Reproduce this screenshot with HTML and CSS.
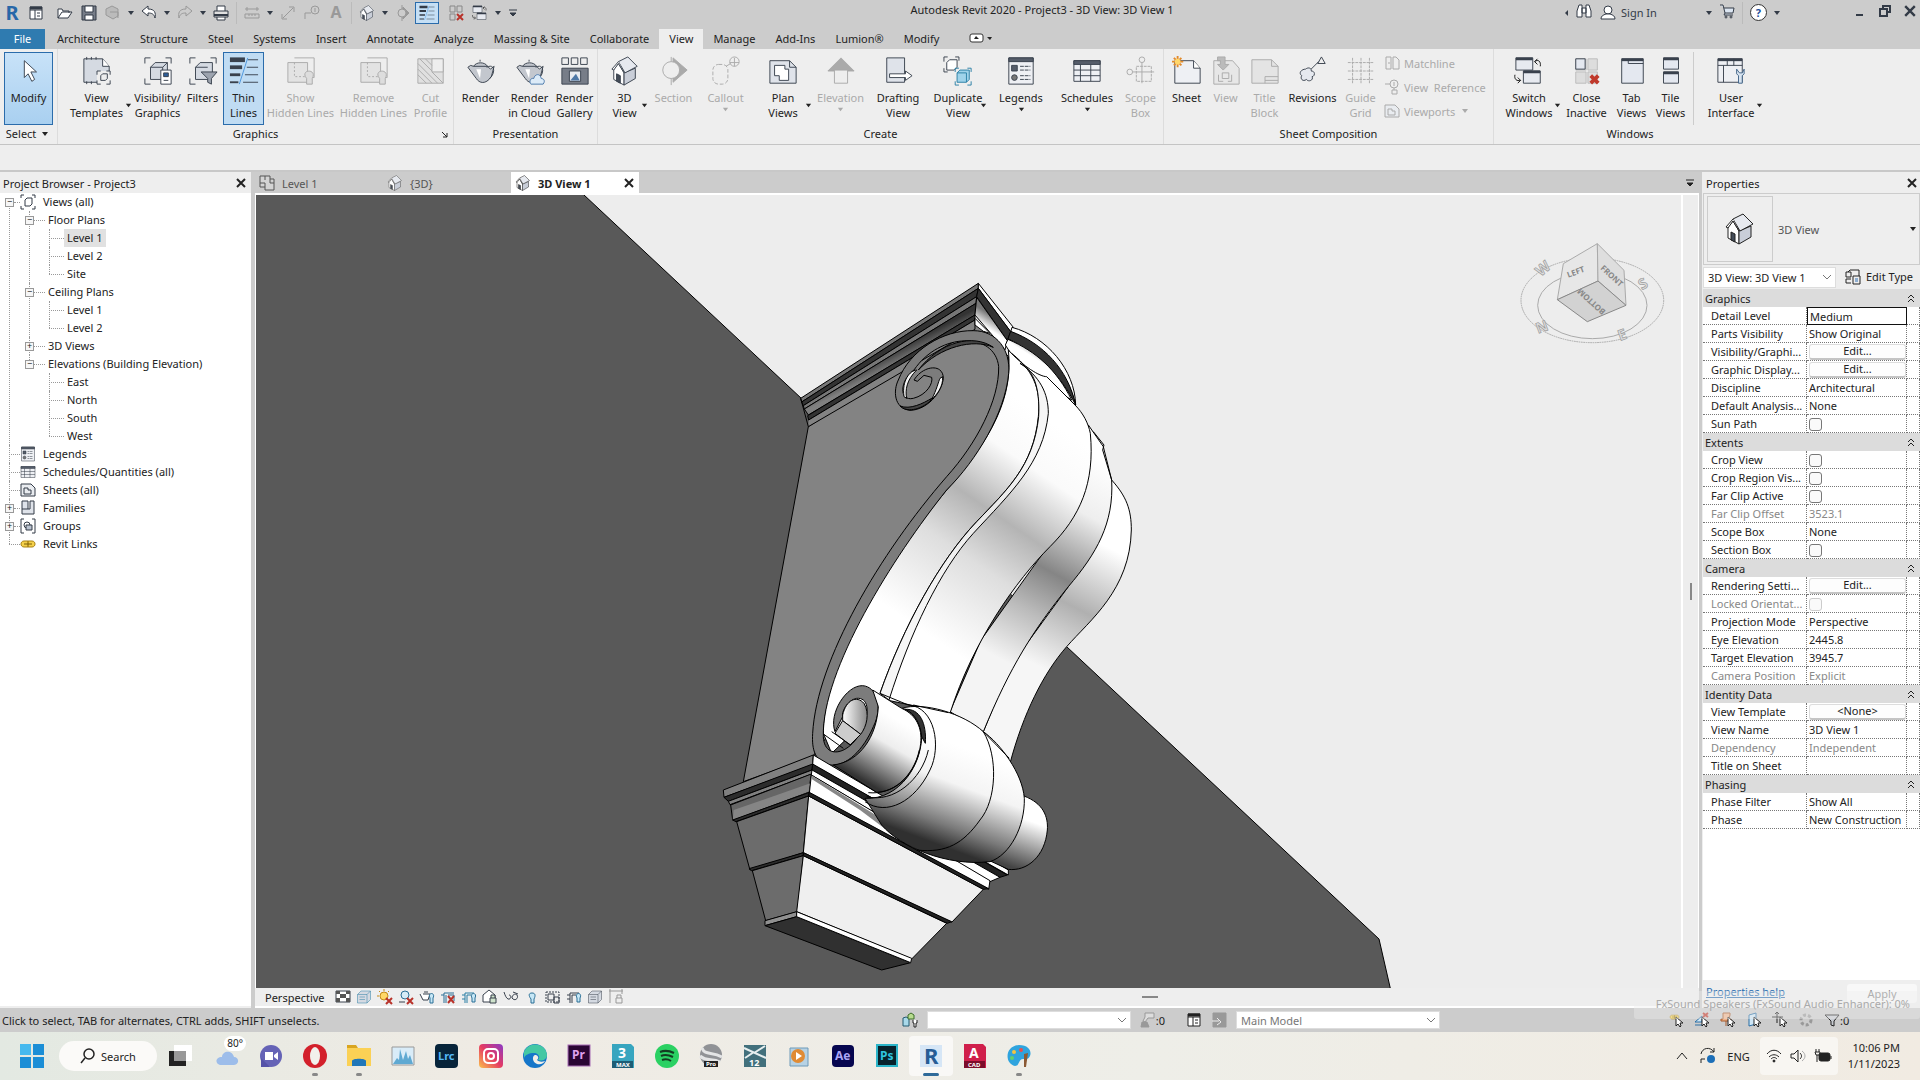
FILE: index.html
```html
<!DOCTYPE html>
<html lang="en">
<head>
  <meta charset="UTF-8">
  <meta name="viewport" content="width=device-width, initial-scale=1.0">
  <title>Autodesk Revit 2020 - Project3 - 3D View: 3D View 1</title>
  <link rel="stylesheet" href="styles.css">
</head>
<body>

  <!-- Icon library -->
  <svg class="defs" width="0" height="0" aria-hidden="true">
    <symbol id="house" viewBox="0 0 32 32"><path fill="#fff" d="M4 14v11l11 6V18L9 8z"/><path fill="#c9ced8" d="M15 18v13l12-7V13z"/><path fill="#e6e9ef" d="M9 6l10-5 10 10-13 7z"/><path fill="#fff" d="M9 6L2 14l2 1 5-7 6 10"/><path fill="#444c58" d="M7 19l4 2v8l-4-2z"/></symbol>
    <symbol id="cube" viewBox="0 0 32 32"><path fill="#d5dae2" d="M3 11l7-7h19v17l-7 7H3zM3 11h19v17M22 11l7-7M7 16h11M7 21h11"/></symbol>
    <symbol id="cursor" viewBox="0 0 32 32"><path fill="#fff" d="M11 5v18l4-4 4 8 3-2-4-8h6z"/></symbol>
    <symbol id="templates" viewBox="0 0 32 32"><path fill="#d5dae2" d="M2 3h20l7 8v17H2z"/><path fill="#fff" d="M22 3v8h7"/><path d="M5 1v3M10 1v3M15 1v3M5 27v3M10 27v3"/><path fill="#eee" d="M16 16h14v14H16z" stroke="none"/><path d="M16 20v-4h4M26 16h4v4M30 26v4h-4M20 30h-4v-4M20 21l2-2h5v5l-2 2h-5z"/></symbol>
    <symbol id="vis" viewBox="0 0 32 32"><path d="M2 8V2h6M24 2h6v6M8 30H2v-6"/><path fill="#d5dae2" d="M8 12l5-5h13v13l-5 5H8zM8 12h13v13M21 12l5-5"/><path fill="#fff" d="M19 15h11v15H19z"/><path fill="#2e5f9a" d="M22 18h5v4h-5zM22 26h5"/></symbol>
    <symbol id="filters" viewBox="0 0 32 32"><path d="M2 8V2h6M24 2h6v6M8 30H2v-6"/><path fill="#d5dae2" d="M8 12l5-5h13v13l-5 5H8zM8 12h13"/><path fill="#9da4af" d="M14 17h17l-6 7v6l-4-2v-4z"/></symbol>
    <symbol id="thin" viewBox="0 0 32 32"><path stroke-width="5" d="M1 4h16"/><path stroke-width="4" d="M1 12h13"/><path stroke-width="3" d="M1 20h11"/><path stroke-width="2" d="M1 28h9"/><path d="M20 4h11M19 12h12M17 20h14M15 28h16"/><path stroke="#4a94dc" d="M20 2l-9 28"/></symbol>
    <symbol id="hidden" viewBox="0 0 32 32"><path d="M9 2h21v21h-8"/><path fill="#e3e3e3" d="M2 7h21v21H2z"/><path stroke-dasharray="2 2" d="M9 7v15h13"/><path fill="#ddd" d="M22 24c-8-10 12-11 6 0v6h-6z"/></symbol>
    <symbol id="profile" viewBox="0 0 32 32"><path fill="#e0e0e0" d="M2 3h27v26H2z"/><path fill="#eee" d="M17 3h12v14H17z"/><path stroke-width="1" d="M2 8l21 21M2 14l15 15M2 20l9 9M4 3l13 13M10 3l7 7M17 17l12 12"/></symbol>
    <symbol id="teapot" viewBox="0 0 32 32"><path fill="#c3c7ce" d="M8 11h15l3 3 4-3-3 11c-6 9-13 7-16 2L2 12l3-2zM8 11c3-5 12-5 15 0M15 6V4"/><path d="M22 12c10-5 9 8 3 12" /><path fill="#fff" stroke="none" d="M11 14h5l-1 10z"/></symbol>
    <symbol id="cloudpot" viewBox="0 0 32 32"><use href="#teapot"/><path fill="#dcebf8" stroke="#4a78aa" d="M17 30h13c3-4 0-6-2-6-1-6-7-5-8 0-4-1-5 4-3 6z"/></symbol>
    <symbol id="gallery" viewBox="0 0 32 32"><path d="M2 2h7v7H2zM12 2h7v7h-7zM22 2h7v7h-7z"/><path fill="#777d88" d="M2 13h28v17H2z"/><path fill="#e7eaf0" d="M10 16h12v11H10z"/><path fill="#4d77a6" stroke="none" d="M11 26l6-7 4 7z"/></symbol>
    <symbol id="section" viewBox="0 0 32 32"><path fill="currentColor" d="M15 2l15 13-15 13z"/><circle cx="13" cy="15" r="9" fill="#eee"/><path d="M13 1v5M13 24v7"/></symbol>
    <symbol id="callout" viewBox="0 0 32 32"><rect x="2" y="9" width="16" height="21" rx="6" stroke-dasharray="4 2"/><circle cx="25" cy="6" r="5"/><path d="M16 11l5-3M20 7h10M25 2v9"/></symbol>
    <symbol id="plan" viewBox="0 0 32 32"><path fill="#dfe3ea" d="M2 5h21l7 7v17H2z"/><path d="M23 5v7h7"/><path fill="#fff" d="M7 10h11v4h4v12H12v-5H7z"/></symbol>
    <symbol id="elevation" viewBox="0 0 32 32"><path fill="currentColor" d="M16 2L2 16h28z"/><path fill="#eee" d="M9 15h14v14H9z"/></symbol>
    <symbol id="drafting" viewBox="0 0 32 32"><path fill="#dfe3ea" d="M4 2h19v26H4z"/><path fill="#fff" d="M7 19h17v-3l7 5-7 5v-3H7z"/></symbol>
    <symbol id="duplicate" viewBox="0 0 32 32"><path d="M1 6V1h4M13 1h4v4M5 17H1v-4"/><path fill="#fff" d="M4 7l3-3h8v8l-3 3H4z"/><path stroke="#2a7fa5" d="M13 17v-4h4M26 13h4v4M30 27v4h-4M17 31h-4v-4"/><path fill="#9fd3ea" stroke="#2a7fa5" d="M15 18l3-3h10v10l-3 3H15zM15 18h10v10"/></symbol>
    <symbol id="legends" viewBox="0 0 32 32"><path fill="#eef0f4" d="M3 2h26v28H3z"/><path fill="#555d6a" d="M3 2h26v4H3zM6 10h6v6H6z"/><circle cx="9" cy="23" r="3" fill="#777"/><path stroke-dasharray="4 1" d="M15 11h11M15 15h11M15 21h11M15 25h11"/></symbol>
    <symbol id="schedule" viewBox="0 0 32 32"><path fill="#eef0f4" d="M2 5h28v22H2z"/><path fill="#555d6a" d="M2 5h28v4H2z"/><path stroke-width="1" d="M2 15h28M2 21h28M9 9v18M20 9v18"/></symbol>
    <symbol id="scope" viewBox="0 0 32 32"><circle cx="17" cy="4" r="3"/><circle cx="4" cy="17" r="3"/><path stroke-dasharray="3 1" d="M11 11h16v16H11z"/><path d="M17 7v22M7 17h23"/></symbol>
    <symbol id="sheet" viewBox="0 0 32 32"><path fill="#eef0f4" d="M3 5h20l7 8v16H3z"/><path fill="#fff" d="M23 5v8h7"/><path stroke="#e28a2b" stroke-width="2" d="M6 0v12M0 6h12M2 2l8 8M10 2l-8 8"/><circle cx="6" cy="6" r="3" fill="#ffd76b" stroke="none"/></symbol>
    <symbol id="sheetview" viewBox="0 0 32 32"><path fill="#e7e7e7" d="M3 5h20l7 8v17H3z"/><path fill="#bbb" d="M7 1h8v8h4l-6 6-6-6h3V5H7z"/><path d="M8 20v7h5M22 20v7h-4M12 18h7v6h-7z"/></symbol>
    <symbol id="titleblock" viewBox="0 0 32 32"><path fill="#e4e4e4" d="M2 4h21l7 7v18H2z"/><path d="M23 4v7h7M16 22h14M16 22v7M16 26h14"/></symbol>
    <symbol id="revisions" viewBox="0 0 32 32"><path fill="#e6e9ef" d="M8 14c4-3 7 0 6 2 5 0 4 6 1 6 2 4-4 6-6 3-4 3-7-1-5-4-4-3 0-7 4-7z"/><path d="M14 14l8-8M21 8l4-7 4 7z"/></symbol>
    <symbol id="grid" viewBox="0 0 32 32"><path stroke-dasharray="3 1" stroke-width="1" d="M7 2v28M16 2v28M25 2v28M2 7h28M2 16h28M2 25h28"/></symbol>
    <symbol id="switch" viewBox="0 0 32 32"><path fill="#e7eaf0" d="M2 2h18v13H2zM10 16h18v13H10z"/><path stroke-width="3" d="M2 3h18M10 17h18"/><path stroke="#111" d="M22 6c4-3 7 0 6 5M25 3l-3 3 3 3M1 20c-1 5 2 7 6 6M4 29l3-3-3-3"/></symbol>
    <symbol id="closewin" viewBox="0 0 32 32"><path fill="#ddd" stroke="#bbb" d="M4 3h11v12H4zM17 3h10v12H17zM4 17h11v12H4zM17 17h10v12H17z"/><path fill="#e4e8f0" d="M4 3h10v11H4z"/><path stroke="#c0392b" stroke-width="4" d="M20 21l8 8M28 21l-8 8"/></symbol>
    <symbol id="tabwin" viewBox="0 0 32 32"><path fill="#e4e8f0" d="M5 3h23v26H5z"/><path stroke-width="3" d="M5 4h23"/><path d="M12 4v4h16"/></symbol>
    <symbol id="tilewin" viewBox="0 0 32 32"><path fill="#e4e8f0" d="M8 2h16v12H8zM8 17h16v12H8z"/><path stroke-width="3" d="M8 3h16M8 18h16"/></symbol>
    <symbol id="ui" viewBox="0 0 32 32"><path fill="#eef0f4" d="M2 3h26v25H2z"/><path stroke-width="3" d="M2 4h26"/><path d="M2 10h26M8 10v18M12 3v7M19 3v7"/><path fill="#d7e3f0" stroke="#3f6286" d="M22 14v5l2 2v8h4v-8l2-2v-5l-2 4h-3z"/></symbol>
    <symbol id="matchline" viewBox="0 0 16 16"><path d="M7 2H2v12h5M9 2h3l3 3v9H9M7 2v12M9 2v12M4 8h2"/></symbol>
    <symbol id="viewref" viewBox="0 0 16 16"><circle cx="10" cy="5" r="4"/><path d="M1 5h5M10 9v2M8 11h5v4H8zM10 3v4"/></symbol>
    <symbol id="planmini" viewBox="0 0 16 16"><path fill="#e9ecf0" d="M1 2h10l4 4v8H1z"/><path d="M4 6h4v2h3v4H4z"/></symbol>
    <symbol id="floor" viewBox="0 0 16 16"><path fill="#d4d4d4" d="M1 1h10v3h4v11H6v-3H1zM6 1v4M1 8h5v4M11 4v4h4"/></symbol>
    <symbol id="panel" viewBox="0 0 16 16"><path fill="#fff" d="M2 2h12v12H2zM2 5h12M7 5v9M9 8h3M9 11h3"/><path stroke-width="3" d="M2 3h12"/></symbol>
    <symbol id="open" viewBox="0 0 16 16"><path fill="#fff" d="M1 13V4h4l1 2h6v2M1 13l4-6h10l-4 6z"/></symbol>
    <symbol id="save" viewBox="0 0 16 16"><path fill="#777d88" d="M1 1h14v14H1z"/><path fill="#fff" d="M4 1h8v6H4zM4 10h8v5H4z"/></symbol>
    <symbol id="sync" viewBox="0 0 16 16"><path fill="#bbb" d="M1 4l6-3 6 3v7l-5 3-7-4zM5 7h8v6"/></symbol>
    <symbol id="undo" viewBox="0 0 16 16"><path fill="#fff" d="M1 6l6-5v3c7 0 8 4 7 9-1-4-3-5-7-5v3z"/></symbol>
    <symbol id="redo" viewBox="0 0 16 16"><path d="M15 6L9 1v3C2 4 1 8 2 13c1-4 3-5 7-5v3z"/></symbol>
    <symbol id="print" viewBox="0 0 16 16"><path fill="#fff" d="M4 6V1h8v5M4 11h8v4H4z"/><path fill="#e0e0e0" d="M1 6h14v6H1z"/><path stroke-width="2" d="M1 10h14"/></symbol>
    <symbol id="measure" viewBox="0 0 16 16"><path d="M1 4h14M3 2v4M13 2v4M1 9h14v4H1zM5 9v2M8 9v2M11 9v2"/></symbol>
    <symbol id="dim" viewBox="0 0 16 16"><path d="M3 13L13 3M9 2h5v5M2 9v5h5"/></symbol>
    <symbol id="tag" viewBox="0 0 16 16"><circle cx="11" cy="5" r="4"/><path d="M1 14V8h6M11 3v4"/></symbol>
    <symbol id="sectionmini" viewBox="0 0 16 16"><path fill="currentColor" d="M8 2l6 6-6 6z"/><circle cx="7" cy="8" r="4" fill="#ccc"/><path d="M7 0v4M7 12v4"/></symbol>
    <symbol id="closemini" viewBox="0 0 16 16"><path d="M2 1h5v6H2zM9 1h5v6H9zM2 9h5v6H2z" stroke="#888"/><path stroke="#b8322a" stroke-width="2" d="M9 9l6 6M15 9l-6 6"/></symbol>
    <symbol id="bino" viewBox="0 0 16 16"><path fill="#fff" d="M3 2h3v12H1V8zM13 2h-3v12h5V8zM6 5h4v5H6z"/></symbol>
    <symbol id="person" viewBox="0 0 16 16"><circle cx="8" cy="5" r="4" fill="#fff"/><path fill="#fff" d="M6 9c-3 1-5 2-5 5h14c0-3-2-4-5-5z"/></symbol>
    <symbol id="cart" viewBox="0 0 16 16"><path fill="#dce6f2" d="M1 2h3l2 8h8l1-5H5M6 10l-1 2h9"/><circle cx="7" cy="14" r="1"/><circle cx="12" cy="14" r="1"/></symbol>
    <symbol id="brackets" viewBox="0 0 16 16"><path d="M4 1H1v3M12 1h3v3M15 12v3h-3M4 15H1v-3M5 6l2-2h5v6l-2 2H5z"/></symbol>
    <symbol id="families" viewBox="0 0 16 16"><path fill="#dfe3ea" d="M2 1h6v8h2V1h4v13H2zM2 9h6"/></symbol>
    <symbol id="groups" viewBox="0 0 16 16"><path d="M4 1H1v14h3M12 1h3v14h-3"/><circle cx="7" cy="7" r="3"/><path fill="#b9c2cf" d="M6 7h6v5H6z"/></symbol>
    <symbol id="link" viewBox="0 0 16 16"><path stroke="#a98213" fill="#f4d04a" d="M4 5h4v6H4c-4 0-4-6 0-6zM8 5h4c4 0 4 6 0 6H8z"/><path stroke="#7b5e08" d="M4 8h8"/></symbol>
    <symbol id="bulb" viewBox="0 0 16 16"><path fill="#c6e7f6" stroke="#2a6f96" d="M7 10C4 6 5 4 8 4s4 2 2 6v4H7z"/></symbol>
    <symbol id="sun" viewBox="0 0 16 16"><circle cx="7" cy="7" r="4" fill="#ffd866" stroke="#c38a19"/><path stroke="#c38a19" d="M7 0v2M0 7h2M2 2l1 1M12 2l-1 1"/><path stroke="#b8322a" stroke-width="2" d="M9 9l6 6M15 9l-6 6"/></symbol>
    <symbol id="shadow" viewBox="0 0 16 16"><circle cx="7" cy="6" r="4" fill="#d6ecf7" stroke="#2a6f96"/><path d="M1 13h6"/><path stroke="#b8322a" stroke-width="2" d="M9 9l6 6M15 9l-6 6"/></symbol>
    <symbol id="crop" viewBox="0 0 16 16"><path stroke="#2a6f96" d="M1 6h3M4 14V4h10M6 14V6M8 6h6v6"/><path stroke="#b8322a" stroke-width="2" d="M8 7l6 7M14 7l-6 7"/></symbol>
    <symbol id="cropview" viewBox="0 0 16 16"><path d="M1 6h3M4 14V4h9M6 14V6h4M1 10h3"/><path fill="#c6e7f6" stroke="#2a6f96" d="M11 9c-3-6 6-6 3 0v4h-3z"/></symbol>
    <symbol id="glasses" viewBox="0 0 16 16"><path d="M1 3c1 3 2 6 4 7 3 1 4-4 1-4M9 9c3 4 7 0 5-3-2-2-5 0-5 3zM10 3l5 2"/></symbol>
    <symbol id="chip" viewBox="0 0 16 16"><path stroke-dasharray="2 1" d="M1 3h13v10H1z"/><path d="M3 5h6v6H3zM9 8h5v6H9z"/></symbol>
    <symbol id="lockhouse" viewBox="0 0 16 16"><path fill="#fff" d="M1 6l6-5 6 5v7H1z"/><path fill="#cfe3cc" d="M8 9h6v5H8zM9 9V6h4v3"/></symbol>
    <symbol id="lockdim" viewBox="0 0 16 16"><path d="M1 2h14M2 0v14M14 0v5M8 9h6v5H8zM9 9V6h4v3"/></symbol>
    <symbol id="pick" viewBox="0 0 16 16"><path fill="#fff" stroke="#222" d="M8 5v9l2-2 2 3 1-1-1-3h3z"/></symbol>
    <symbol id="funnel" viewBox="0 0 16 16"><path fill="#c8ccd2" d="M1 3h14l-5 6v5l-3-1V9z"/></symbol>
    <symbol id="down" viewBox="0 0 8 8"><path fill="currentColor" stroke="none" d="M1 2h6L4 6z"/></symbol>
    <symbol id="up2" viewBox="0 0 8 10"><path d="M1 5l3-3 3 3M1 9l3-3 3 3"/></symbol>
    <symbol id="x" viewBox="0 0 10 10"><path d="M1 1l8 8M9 1L1 9"/></symbol>
  </svg>

  <header class="titlebar">
    <div class="qat">
      <button aria-label="Revit" class="logo-r">R</button>
      <button aria-label="Home"><svg class="icon16"><use href="#panel"/></svg></button>
      <span class="gap"></span>
      <button aria-label="Open"><svg class="icon16"><use href="#open"/></svg></button>
      <button aria-label="Save"><svg class="icon16"><use href="#save"/></svg></button>
      <button class="off" aria-label="Synchronize"><svg class="icon16"><use href="#sync"/></svg></button>
      <svg class="arrow"><use href="#down"/></svg>
      <button aria-label="Undo"><svg class="icon16"><use href="#undo"/></svg></button>
      <svg class="arrow"><use href="#down"/></svg>
      <button class="off" aria-label="Redo"><svg class="icon16"><use href="#redo"/></svg></button>
      <svg class="arrow"><use href="#down"/></svg>
      <button aria-label="Print"><svg class="icon16"><use href="#print"/></svg></button>
      <span class="bar"></span>
      <button class="off" aria-label="Measure"><svg class="icon16"><use href="#measure"/></svg></button>
      <svg class="arrow"><use href="#down"/></svg>
      <button class="off" aria-label="Aligned dimension"><svg class="icon16"><use href="#dim"/></svg></button>
      <button class="off" aria-label="Tag"><svg class="icon16"><use href="#tag"/></svg></button>
      <button class="off letter">A</button>
      <span class="bar"></span>
      <button aria-label="3D view"><svg class="icon16"><use href="#house"/></svg></button>
      <svg class="arrow"><use href="#down"/></svg>
      <button class="off" aria-label="Section"><svg class="icon16"><use href="#sectionmini"/></svg></button>
      <button class="on" aria-label="Thin lines"><svg class="icon16"><use href="#thin"/></svg></button>
      <span class="gap"></span>
      <button aria-label="Close inactive"><svg class="icon16"><use href="#closemini"/></svg></button>
      <button aria-label="Switch windows"><svg class="icon16"><use href="#switch"/></svg></button>
      <svg class="arrow"><use href="#down"/></svg>
      <svg class="arrow customize" viewBox="0 0 10 10"><path d="M1 2h8"/><path fill="currentColor" d="M2 5h6L5 8z"/></svg>
    </div>
    <h1>Autodesk Revit 2020 - Project3 - 3D View: 3D View 1</h1>
    <div class="account">
      <svg class="arrow" viewBox="0 0 8 8"><path fill="currentColor" stroke="none" d="M6 1v6L3 4z"/></svg>
      <button aria-label="Search"><svg class="icon16"><use href="#bino"/></svg></button>
      <button class="signin"><svg class="icon16"><use href="#person"/></svg>Sign In</button>
      <svg class="arrow"><use href="#down"/></svg>
      <button aria-label="Store"><svg class="icon16"><use href="#cart"/></svg></button>
      <span class="bar"></span>
      <button class="help">?</button>
      <svg class="arrow"><use href="#down"/></svg>
      <div class="window-buttons">
        <button aria-label="Minimize"><svg class="icon12" viewBox="0 0 12 12"><path stroke-width="2" d="M2 10h7"/></svg></button>
        <button aria-label="Restore"><svg class="icon12" viewBox="0 0 12 12"><path d="M4 4V1h7v6H8M1 4h7v7H1z"/></svg></button>
        <button aria-label="Close"><svg class="icon12"><use href="#x"/></svg></button>
      </div>
    </div>
  </header>

  <nav class="tabs">
    <button class="file">File</button>
    <button>Architecture</button>
    <button>Structure</button>
    <button>Steel</button>
    <button>Systems</button>
    <button>Insert</button>
    <button>Annotate</button>
    <button>Analyze</button>
    <button>Massing &amp; Site</button>
    <button>Collaborate</button>
    <button class="active">View</button>
    <button>Manage</button>
    <button>Add-Ins</button>
    <button>Lumion®</button>
    <button>Modify</button>
    <button class="minimize" aria-label="Minimize ribbon"><svg width="24" height="10" viewBox="0 0 24 10"><rect x="1" y="1" width="13" height="8" rx="2" fill="#fff" stroke="#333"/><path d="M5 6l2-3 3 3zM18 4h5l-2 3z" fill="#222"/></svg></button>
  </nav>

  <section class="ribbon">
    <div class="group select">
      <div class="tools"><button class="tool w48 modify"><svg><use href="#cursor"/></svg>Modify</button></div>
      <div class="group-name">Select <svg class="arrow"><use href="#down"/></svg></div>
    </div>
    <div class="group">
      <div class="tools">
        <button class="tool w74"><svg><use href="#templates"/></svg>View<br>Templates<svg class="drop"><use href="#down"/></svg></button>
        <button class="tool w48"><svg><use href="#vis"/></svg>Visibility/<br>Graphics</button>
        <button class="tool w40"><svg><use href="#filters"/></svg>Filters</button>
        <button class="tool w40 on"><svg><use href="#thin"/></svg>Thin<br>Lines</button>
        <button class="tool w74" disabled><svg><use href="#hidden"/></svg>Show<br>Hidden Lines</button>
        <button class="tool w74" disabled><svg><use href="#hidden"/></svg>Remove<br>Hidden Lines</button>
        <button class="tool w40" disabled><svg><use href="#profile"/></svg>Cut<br>Profile</button>
      </div>
      <div class="group-name">Graphics<svg class="launch" viewBox="0 0 8 8"><path d="M1 1l5 5M6 2v4H2"/></svg></div>
    </div>
    <div class="group">
      <div class="tools">
        <button class="tool w48"><svg><use href="#teapot"/></svg>Render</button>
        <button class="tool w48"><svg><use href="#cloudpot"/></svg>Render<br>in Cloud</button>
        <button class="tool w40"><svg><use href="#gallery"/></svg>Render<br>Gallery</button>
      </div>
      <div class="group-name">Presentation</div>
    </div>
    <div class="group">
      <div class="tools">
        <button class="tool w48"><svg><use href="#house"/></svg>3D<br>View<svg class="drop"><use href="#down"/></svg></button>
        <button class="tool w48" disabled><svg><use href="#section"/></svg>Section</button>
        <button class="tool w54" disabled><svg><use href="#callout"/></svg>Callout<svg class="drop under"><use href="#down"/></svg></button>
        <button class="tool w60"><svg><use href="#plan"/></svg>Plan<br>Views<svg class="drop"><use href="#down"/></svg></button>
        <button class="tool w54" disabled><svg><use href="#elevation"/></svg>Elevation<svg class="drop under"><use href="#down"/></svg></button>
        <button class="tool w60"><svg><use href="#drafting"/></svg>Drafting<br>View</button>
        <button class="tool w60"><svg><use href="#duplicate"/></svg>Duplicate<br>View<svg class="drop"><use href="#down"/></svg></button>
        <button class="tool w68"><svg><use href="#legends"/></svg>Legends<svg class="drop under"><use href="#down"/></svg></button>
        <button class="tool w68"><svg><use href="#schedule"/></svg>Schedules<svg class="drop under"><use href="#down"/></svg></button>
        <button class="tool w40" disabled><svg><use href="#scope"/></svg>Scope<br>Box</button>
      </div>
      <div class="group-name">Create</div>
    </div>
    <div class="group">
      <div class="tools">
        <button class="tool w40"><svg><use href="#sheet"/></svg>Sheet</button>
        <button class="tool w36" disabled><svg><use href="#sheetview"/></svg>View</button>
        <button class="tool w40" disabled><svg><use href="#titleblock"/></svg>Title<br>Block</button>
        <button class="tool w54"><svg><use href="#revisions"/></svg>Revisions</button>
        <button class="tool w40" disabled><svg><use href="#grid"/></svg>Guide<br>Grid</button>
        <div class="small-tools">
          <button disabled><svg class="icon16"><use href="#matchline"/></svg>Matchline</button>
          <button disabled><svg class="icon16"><use href="#viewref"/></svg>View&nbsp; Reference</button>
          <button disabled><svg class="icon16"><use href="#planmini"/></svg>Viewports <svg class="arrow"><use href="#down"/></svg></button>
        </div>
      </div>
      <div class="group-name">Sheet Composition</div>
    </div>
    <div class="group last">
      <div class="tools">
        <button class="tool w68"><svg><use href="#switch"/></svg>Switch<br>Windows<svg class="drop"><use href="#down"/></svg></button>
        <button class="tool w48"><svg><use href="#closewin"/></svg>Close<br>Inactive</button>
        <button class="tool w40"><svg><use href="#tabwin"/></svg>Tab<br>Views</button>
        <button class="tool w36"><svg><use href="#tilewin"/></svg>Tile<br>Views</button>
        <span class="rule"></span>
        <button class="tool w68"><svg><use href="#ui"/></svg>User<br>Interface<svg class="drop"><use href="#down"/></svg></button>
      </div>
      <div class="group-name">Windows</div>
    </div>
  </section>
  <div class="options-bar"></div>

  <main class="workspace">
    <aside class="browser">
      <div class="panel-title">Project Browser - Project3<button aria-label="Close project browser"><svg class="icon10"><use href="#x"/></svg></button></div>
      <ul class="tree">
        <li><div class="row"><button class="exp">−</button><i class="d6"></i><svg class="icon16"><use href="#brackets"/></svg><span>Views (all)</span></div>
          <ul>
            <li><div class="row"><button class="exp">−</button><i class="d10"></i><span>Floor Plans</span></div>
              <ul>
                <li><div class="row"><i class="d15"></i><span class="selected">Level 1</span></div></li>
                <li><div class="row"><i class="d15"></i><span>Level 2</span></div></li>
                <li><div class="row"><i class="d15"></i><span>Site</span></div></li>
              </ul>
            </li>
            <li><div class="row"><button class="exp">−</button><i class="d10"></i><span>Ceiling Plans</span></div>
              <ul>
                <li><div class="row"><i class="d15"></i><span>Level 1</span></div></li>
                <li><div class="row"><i class="d15"></i><span>Level 2</span></div></li>
              </ul>
            </li>
            <li><div class="row"><button class="exp">+</button><i class="d10"></i><span>3D Views</span></div></li>
            <li><div class="row"><button class="exp">−</button><i class="d10"></i><span>Elevations (Building Elevation)</span></div>
              <ul>
                <li><div class="row"><i class="d15"></i><span>East</span></div></li>
                <li><div class="row"><i class="d15"></i><span>North</span></div></li>
                <li><div class="row"><i class="d15"></i><span>South</span></div></li>
                <li><div class="row"><i class="d15"></i><span>West</span></div></li>
              </ul>
            </li>
          </ul>
        </li>
        <li><div class="row"><i class="d10"></i><svg class="icon16"><use href="#legends"/></svg><span>Legends</span></div></li>
        <li><div class="row"><i class="d10"></i><svg class="icon16"><use href="#schedule"/></svg><span>Schedules/Quantities (all)</span></div></li>
        <li><div class="row"><i class="d10"></i><svg class="icon16"><use href="#planmini"/></svg><span>Sheets (all)</span></div></li>
        <li><div class="row"><button class="exp">+</button><i class="d6"></i><svg class="icon16"><use href="#families"/></svg><span>Families</span></div></li>
        <li><div class="row"><button class="exp">+</button><i class="d6"></i><svg class="icon16"><use href="#groups"/></svg><span>Groups</span></div></li>
        <li><div class="row"><i class="d10"></i><svg class="icon16"><use href="#link"/></svg><span>Revit Links</span></div></li>
      </ul>
    </aside>

    <section class="view">
      <div class="view-tabs">
        <button><svg class="icon16"><use href="#floor"/></svg>Level 1</button>
        <button><svg class="icon16"><use href="#house"/></svg>{3D}</button>
        <button class="active"><svg class="icon16"><use href="#house"/></svg>3D View 1<svg class="icon10 close"><use href="#x"/></svg></button>
        <svg class="tab-menu" viewBox="0 0 10 10"><path d="M1 2h8"/><path fill="currentColor" d="M2 5h6L5 8z"/></svg>
      </div>

      <div class="canvas">
        <svg class="scene" viewBox="256 195 1425 793" preserveAspectRatio="xMinYMin slice">
          <defs>
            <linearGradient id="band" gradientUnits="userSpaceOnUse" x1="966" y1="518" x2="550" y2="1125"><stop offset="0" stop-color="#fff"/><stop offset=".2" stop-color="#fafafa"/><stop offset=".44" stop-color="#b4b4b4"/><stop offset=".65" stop-color="#dedede"/><stop offset="1" stop-color="#fff"/></linearGradient>
            <linearGradient id="bandDark" gradientUnits="userSpaceOnUse" x1="1010" y1="560" x2="690" y2="1150"><stop offset="0" stop-color="#fff"/><stop offset=".25" stop-color="#eee"/><stop offset=".55" stop-color="#858585"/><stop offset=".75" stop-color="#bbb"/><stop offset="1" stop-color="#f4f4f4"/></linearGradient>
            <linearGradient id="bandLast" gradientUnits="userSpaceOnUse" x1="1090" y1="740" x2="860" y2="1200"><stop offset="0" stop-color="#fff"/><stop offset=".2" stop-color="#fff"/><stop offset=".6" stop-color="#b0b0b0"/><stop offset="1" stop-color="#f6f6f6"/></linearGradient>
            <linearGradient id="cove" gradientUnits="userSpaceOnUse" x1="380" y1="250" x2="400" y2="290"><stop offset="0" stop-color="#333"/><stop offset="1" stop-color="#808080"/></linearGradient>
            <linearGradient id="coveLight" gradientUnits="userSpaceOnUse" x1="850" y1="235" x2="815" y2="290"><stop offset="0" stop-color="#777"/><stop offset=".6" stop-color="#fff"/></linearGradient>
            <linearGradient id="barrel" gradientUnits="userSpaceOnUse" x1="810" y1="330" x2="700" y2="625"><stop offset="0" stop-color="#fff"/><stop offset=".35" stop-color="#f4f4f4"/><stop offset=".75" stop-color="#7a7a7a"/><stop offset=".95" stop-color="#303030"/></linearGradient>
            <linearGradient id="roll" gradientUnits="userSpaceOnUse" x1="610" y1="250" x2="500" y2="440"><stop offset="0" stop-color="#fff"/><stop offset=".35" stop-color="#eee"/><stop offset=".95" stop-color="#333"/></linearGradient>
            <linearGradient id="roll2" gradientUnits="userSpaceOnUse" x1="1010" y1="550" x2="960" y2="690"><stop offset="0" stop-color="#fff"/><stop offset="1" stop-color="#444"/></linearGradient>
            <linearGradient id="hole" x1="0" y1="0" x2="1" y2="0"><stop offset="0" stop-color="#fff"/><stop offset="1" stop-color="#888"/></linearGradient>
          </defs>
          <path class="wall" d="M240 180H568L1379 939L1393 1000H240z"/>

          <!-- upper half: side panel, cornice, scroll -->
          <g transform="translate(760 270) scale(.33333)">
            <path fill="#838383" d="M145 470L640 150L746 260L700 700L158 1460L-50 1535z"/>
            <path fill="#777" d="M122 385L655 40V55L125 396z"/>
            <path fill="#333" d="M125 396L655 55L650 80L130 407z"/>
            <path fill="#777" d="M130 407L650 80L648 100L133 417z"/>
            <path fill="url(#cove)" d="M133 417L648 100L645 135L145 435z"/>
            <path fill="#333" d="M143 437L645 135V150L146 450z"/>
            <path fill="#838383" d="M146 450L645 150V178L145 470"/>
            <path fill="#fff" d="M655 40L760 172L752 185L655 55z"/>
            <path fill="#333" d="M655 55L752 185L742 212L650 80z"/>
            <path fill="url(#coveLight)" d="M650 82L742 212L735 240L645 135z"/>
            <path fill="#fff" d="M645 145L690 190L670 184L645 165z"/>
            <path fill="#fff" d="M756 172C860 200 945 300 947 405C925 310 850 225 752 186z"/>
            <path fill="#333" d="M752 184C850 220 925 300 947 405C900 310 830 250 744 206z"/>
            <path fill="url(#coveLight)" d="M744 208C830 245 890 300 935 390L840 330L760 262L736 225z"/>
            <path fill="url(#bandLast)" d="M1055 630C1100 680 1114 720 1114 780C1110 960 990 1050 920 1130C850 1210 790 1330 750 1480L670 1385L750 1190L925 950z"/>
            <path fill="url(#bandDark)" d="M985 465L1030 530L1055 630C1062 760 1010 850 925 950C820 1080 750 1190 670 1385L570 1325L663 1110L870 820z"/>
            <path fill="url(#band)" d="M745 240C790 290 840 320 860 320L945 405C970 430 985 460 991 490C1005 640 960 740 870 830C770 930 640 1110 570 1330L380 1290L215 1450L190 1390C185 1190 400 850 560 660C700 500 760 380 745 240z"/>
            <path fill="none" d="M755 250C830 310 842 370 835 440C820 590 740 660 650 755C540 870 430 1070 360 1270"/>
            <path fill="#f4f4f4" fill-opacity=".8" d="M780 280C820 300 840 350 836 440C820 590 740 660 650 755C540 870 430 1070 360 1270L387 1290C450 1090 540 900 640 790C750 670 850 580 865 430C865 370 840 320 780 280z"/>
            <path class="rim" d="M640 182C710 182 752 240 746 310C735 430 650 570 560 660C400 860 185 1200 190 1400C192 1465 260 1460 300 1390C336 1320 322 1282 290 1285C260 1290 243 1330 248 1340L225 1385C205 1330 260 1245 308 1247C350 1250 370 1310 340 1370C310 1440 260 1490 210 1485C165 1475 155 1440 158 1390C170 1170 360 850 560 620C650 520 718 390 716 290C705 185 540 185 462 300C420 330 415 395 460 385C500 375 520 340 515 322L492 316L472 334L462 330C490 285 550 280 550 325C545 370 500 420 450 421C400 415 400 360 415 330C450 240 550 180 640 182z"/>
            <path fill="#444" d="M475 300C540 215 640 190 700 232C640 205 540 230 475 300z"/>
            <path fill="#f5f5f5" d="M432 380C425 330 450 302 470 300C440 330 435 360 440 385zM548 320C550 350 530 375 515 388C530 360 535 335 540 325z"/>
            <path fill="#444" d="M420 408C450 420 490 400 515 385L510 394C480 420 440 428 420 408z"/>
            <path fill="url(#hole)" d="M248 1335C258 1290 290 1275 312 1300C330 1330 320 1370 302 1393L248 1352z"/>
            <path fill="#ccc" d="M248 1352L302 1393L270 1425L225 1390z"/>
            <path fill="none" d="M190 1392L250 1435M215 1385L272 1425M1000 485L1032 525L1028 540L1055 630M145 470L122 385"/>
          </g>

          <!-- lower half: pedestal and barrel -->
          <g transform="translate(700 640) scale(.33333)">
            <path fill="#808080" d="M70 450L340 345L338 375L72 472z"/>
            <path fill="#2c2c2c" d="M72 472L338 372L336 390L85 484z"/>
            <path fill="#808080" d="M85 484L336 390V402L90 494z"/>
            <path fill="#666" d="M92 495L334 402L326 455L98 540z"/>
            <path fill="#858585" d="M101 510L331 430L326 455L98 540z" stroke="none"/>
            <path fill="#2c2c2c" d="M98 540L328 457L326 468L108 545z"/>
            <path fill="#6c6c6c" d="M110 545L326 468L310 638L150 690z"/>
            <path fill="#2c2c2c" d="M147 686L310 638L310 647L155 692z"/>
            <path fill="#6c6c6c" d="M157 692L310 647L292 815L197 842z"/>
            <path fill="#909090" d="M195 842L290 815V830L195 857z"/>
            <path fill="#303030" d="M195 857L290 830L632 968L545 990z"/>
            <path fill="#fff" d="M340 345L925 690V705L338 374z"/>
            <path fill="#222" d="M338 372L922 705L900 712L336 390z"/>
            <path fill="#fff" d="M336 390L900 712L870 725L334 405z"/>
            <path fill="#fff" d="M334 405L870 722L866 748L328 460z"/>
            <path fill="#888" stroke="none" d="M336 407L560 545L600 600L480 510L336 418z"/>
            <path fill="#efefef" d="M326 468L850 748L755 847L310 638z"/>
            <path fill="#efefef" d="M310 647L740 850L635 957L290 815z"/>
            <path fill="#222" d="M328 457L866 746L850 748L326 468zM310 638L755 845L742 850L310 647z"/>
            <path fill="#fff" d="M290 815L635 955L632 968L290 830z"/>
            <path fill="url(#roll2)" d="M972 468C1030 490 1045 530 1042 570C1035 650 980 695 925 688L860 658z"/>
            <path fill="url(#barrel)" d="M605 205C670 185 790 220 850 275C900 310 968 400 973 475C975 560 930 645 870 665C740 680 600 620 545 555L495 475C600 480 670 370 665 275C655 230 640 212 605 205z"/>
            <path fill="#333" d="M615 208C660 205 680 250 676 310L665 290C660 250 645 220 615 208z"/>
            <path fill="url(#roll)" d="M518 150L605 205C650 225 667 265 662 310C655 385 600 455 530 457L400 375C480 365 530 290 535 200z"/>
            <path fill="none" d="M625 195C705 200 725 320 690 390C645 485 560 530 495 485M850 275C895 350 890 480 840 540C790 610 740 640 650 630M658 330C640 410 580 465 505 458M685 330C665 420 580 490 500 470M928 355L850 275M745 218L640 195M540 160L625 195"/>
          </g>
        </svg>
        <svg class="viewcube" viewBox="0 0 450 330">
          <g fill="none" stroke="#aaa" stroke-width="3">
            <ellipse cx="217" cy="190" rx="214" ry="127" stroke-dasharray="5 2"/><ellipse cx="217" cy="205" rx="164" ry="100"/>
            <path fill="#e7e7e7" d="M130 80L232 20L234 132L112 188z"/><path fill="#dedede" d="M232 20L312 100L318 205L234 132z"/><path fill="#d2d2d2" stroke="#888" d="M234 132L318 205L202 254L112 188z"/>
          </g>
          <text x="145" y="122" transform="rotate(-20 145 122)">LEFT</text>
          <text x="240" y="95" transform="rotate(43 240 95)">FRONT</text>
          <text x="258" y="222" transform="rotate(222 258 222)">BOTTOM</text>
          <text class="compass" x="62" y="120" transform="rotate(-40 62 120)">W</text>
          <text class="compass" x="366" y="160" transform="rotate(-30 366 160)">S</text>
          <text class="compass" x="54" y="290" transform="rotate(-20 54 290)">N</text>
          <text class="compass" x="300" y="312" transform="rotate(-20 300 312)">E</text>
        </svg>
        <div class="vscroll"><span></span></div>
      </div>

      <div class="view-controls">
        <span class="scale">Perspective</span>
        <button aria-label="Detail level"><svg class="icon16" viewBox="0 0 16 16"><path fill="#fff" d="M1 2h14v11H1z"/><path fill="#555" stroke="none" d="M1 2h4v3H1zM11 2h4v3h-4zM5 5h6v4H5zM1 9h4v4H1zM11 9h4v4h-4z"/></svg></button>
        <button aria-label="Visual style"><svg class="icon16 blue"><use href="#cube"/></svg></button>
        <button aria-label="Sun path"><svg class="icon16"><use href="#sun"/></svg></button>
        <button aria-label="Shadows"><svg class="icon16"><use href="#shadow"/></svg></button>
        <button aria-label="Rendering"><svg class="icon16" viewBox="0 0 16 16"><path fill="#fff" d="M1 5l3 6h5l2-6H4M5 3h4"/><path fill="#c6e7f6" stroke="#2a6f96" d="M11 9c-3-6 6-6 3 0v5h-3z"/></svg></button>
        <button aria-label="Crop view"><svg class="icon16"><use href="#crop"/></svg></button>
        <button aria-label="Crop region"><svg class="icon16 blue"><use href="#cropview"/></svg></button>
        <button aria-label="Lock view"><svg class="icon16"><use href="#lockhouse"/></svg></button>
        <button aria-label="Temporary hide"><svg class="icon16"><use href="#glasses"/></svg></button>
        <button aria-label="Reveal hidden"><svg class="icon16"><use href="#bulb"/></svg></button>
        <button aria-label="View properties"><svg class="icon16"><use href="#chip"/></svg></button>
        <button aria-label="Analytical model"><svg class="icon16"><use href="#cropview"/></svg></button>
        <button aria-label="Displacement"><svg class="icon16"><use href="#cube"/></svg></button>
        <button class="off" aria-label="Constraints"><svg class="icon16"><use href="#lockdim"/></svg></button>
        <span class="hscroll"></span>
      </div>
    </section>

    <aside class="properties">
      <div class="panel-title">Properties<button aria-label="Close properties"><svg class="icon10"><use href="#x"/></svg></button></div>
      <div class="type">
        <div class="thumb"><svg class="icon32"><use href="#house"/></svg></div>
        <span>3D View</span>
        <svg class="arrow"><use href="#down"/></svg>
      </div>
      <div class="instance">
        <select aria-label="View"><option>3D View: 3D View 1</option></select>
        <button><svg class="icon16" viewBox="0 0 16 16"><path d="M1 3h5v5H1zM3 3l2-2h9v6M6 10H1v4h5M8 7h7v8H8z"/><path stroke="#2e6fb5" d="M10 10h3M10 12h3"/></svg>Edit Type</button>
      </div>
      <table>
        <colgroup><col class="name"><col><col class="link"></colgroup>
        <tbody>
          <tr class="cat"><th colspan="3">Graphics<svg class="arrow"><use href="#up2"/></svg></th></tr>
          <tr><th>Detail Level</th><td class="focused">Medium</td><td></td></tr>
          <tr><th>Parts Visibility</th><td>Show Original</td><td></td></tr>
          <tr><th>Visibility/Graphi...</th><td><button>Edit...</button></td><td></td></tr>
          <tr><th>Graphic Display...</th><td><button>Edit...</button></td><td></td></tr>
          <tr><th>Discipline</th><td>Architectural</td><td></td></tr>
          <tr><th>Default Analysis...</th><td>None</td><td></td></tr>
          <tr><th><label for="sun-path">Sun Path</label></th><td><input type="checkbox" id="sun-path"></td><td></td></tr>
        </tbody>
        <tbody>
          <tr class="cat"><th colspan="3">Extents<svg class="arrow"><use href="#up2"/></svg></th></tr>
          <tr><th><label for="crop-view">Crop View</label></th><td><input type="checkbox" id="crop-view"></td><td></td></tr>
          <tr><th><label for="crop-region">Crop Region Vis...</label></th><td><input type="checkbox" id="crop-region"></td><td></td></tr>
          <tr><th><label for="far-clip">Far Clip Active</label></th><td><input type="checkbox" id="far-clip"></td><td></td></tr>
          <tr class="readonly"><th>Far Clip Offset</th><td>3523.1</td><td></td></tr>
          <tr><th>Scope Box</th><td>None</td><td></td></tr>
          <tr><th><label for="section-box">Section Box</label></th><td><input type="checkbox" id="section-box"></td><td></td></tr>
        </tbody>
        <tbody>
          <tr class="cat"><th colspan="3">Camera<svg class="arrow"><use href="#up2"/></svg></th></tr>
          <tr><th>Rendering Setti...</th><td><button>Edit...</button></td><td></td></tr>
          <tr class="readonly"><th><label for="locked">Locked Orientat...</label></th><td><input type="checkbox" id="locked" disabled></td><td></td></tr>
          <tr><th>Projection Mode</th><td>Perspective</td><td></td></tr>
          <tr><th>Eye Elevation</th><td>2445.8</td><td></td></tr>
          <tr><th>Target Elevation</th><td>3945.7</td><td></td></tr>
          <tr class="readonly"><th>Camera Position</th><td>Explicit</td><td></td></tr>
        </tbody>
        <tbody>
          <tr class="cat"><th colspan="3">Identity Data<svg class="arrow"><use href="#up2"/></svg></th></tr>
          <tr><th>View Template</th><td><button>&lt;None&gt;</button></td><td></td></tr>
          <tr><th>View Name</th><td>3D View 1</td><td></td></tr>
          <tr class="readonly"><th>Dependency</th><td>Independent</td><td></td></tr>
          <tr><th>Title on Sheet</th><td></td><td></td></tr>
        </tbody>
        <tbody>
          <tr class="cat"><th colspan="3">Phasing<svg class="arrow"><use href="#up2"/></svg></th></tr>
          <tr><th>Phase Filter</th><td>Show All</td><td></td></tr>
          <tr><th>Phase</th><td>New Construction</td><td></td></tr>
        </tbody>
      </table>
      <div class="properties-footer"><a href="#help">Properties help</a><button disabled>Apply</button></div>
    </aside>
  </main>

  <footer class="status">
    <span class="hint">Click to select, TAB for alternates, CTRL adds, SHIFT unselects.</span>
    <div class="worksets">
      <svg class="icon16" viewBox="0 0 16 16"><path fill="#a9d9ea" stroke="#245a70" d="M1 6l3-1 3 1v8H1z"/><path fill="#b7dc8e" stroke="#3d6d2a" d="M6 3l3-2 3 2v4H6z"/><path fill="#fff" d="M11 8v3h1v4h2v-4h1V8"/></svg>
      <select aria-label="Active workset"><option></option></select>
      <span class="count off"><svg class="icon16" viewBox="0 0 16 16"><path fill="#ddd" d="M5 1h9v5H8l-3 4-2-1 2-4z"/><path fill="#999" d="M2 10h5l2 5H1z"/></svg><b>:0</b></span>
      <svg class="icon16"><use href="#panel"/></svg>
      <svg class="icon16 off" viewBox="0 0 16 16"><path fill="#999" d="M2 1h13v14H2z"/><path stroke="#eee" d="M1 9h7M6 6l4 4-4 3"/></svg>
      <select class="muted" aria-label="Design option"><option>Main Model</option></select>
    </div>
    <div class="selection">
      <svg class="icon16" viewBox="0 0 16 16"><use href="#link" width="13" height="10"/><use href="#pick"/></svg>
      <svg class="icon16" viewBox="0 0 16 16"><path stroke="#2a6fa5" fill="#cfe6f5" d="M1 10l7-6v6zM1 13h7"/><path stroke="#c0392b" stroke-width="2" d="M9 1l5 4M14 1L9 5"/><use href="#pick"/></svg>
      <svg class="icon16" viewBox="0 0 16 16"><path stroke="#a5592a" fill="#efb38a" d="M3 1h7v2L9 7h2v2H1V7h2zM6 9v5"/><use href="#pick"/></svg>
      <svg class="icon16" viewBox="0 0 16 16"><path stroke="#2a6fa5" fill="#cfe6f5" d="M3 3l7-2v11l-7 2z"/><use href="#pick"/></svg>
      <svg class="icon16" viewBox="0 0 16 16"><path d="M5 0v11M0 5h11M3 2l2-2 2 2"/><use href="#pick"/></svg>
      <svg class="icon16 off" viewBox="0 0 16 16"><circle cx="8" cy="8" r="5" stroke-width="3" stroke-dasharray="3 2"/></svg>
      <span class="count"><svg class="icon16"><use href="#funnel"/></svg>:0</span>
    </div>
    <div class="toast">FxSound Speakers (FxSound Audio Enhancer): 0%</div>
  </footer>

  <nav class="taskbar">
    <button class="app" aria-label="Start"><svg viewBox="0 0 24 24"><path fill="#1b8ed6" d="M0 0h11v11H0zM13 0h11v11H13zM0 13h11v11H0zM13 13h11v11H13z"/><path fill="#46b9ee" d="M0 0h11v11H0z"/></svg></button>
    <button class="search"><svg width="16" height="16" viewBox="0 0 16 16" fill="none" stroke="#222" stroke-width="1.5"><circle cx="9" cy="6" r="5"/><path d="M5 10l-4 5"/></svg>Search</button>
    <button class="app" aria-label="Task view"><svg viewBox="0 0 24 24"><path fill="#fff" d="M6 1h18v16H6z"/><path fill="#222" d="M1 7h17v15H1z"/><path fill="#999" d="M6 7h12v10H6z"/></svg></button>
    <button class="app weather"><svg viewBox="0 0 24 24"><path fill="#9dbdea" d="M5 21h14c6-1 5-8 0-8-2-8-12-6-12 0-7 0-7 7-2 8z"/></svg><span class="badge">80°</span></button>
    <button class="app" aria-label="Chat"><svg viewBox="0 0 24 24"><circle cx="12" cy="12" r="11" fill="#6563b6"/><path fill="#5552a8" d="M2 14v9h9z"/><path fill="#fff" d="M6 8h8v8H6zM15 11l4-3v8l-4-3z"/></svg></button>
    <button class="app running" aria-label="Opera"><svg viewBox="0 0 24 24"><ellipse cx="12" cy="12" rx="12" ry="12" fill="#d3202b"/><ellipse cx="12" cy="12" rx="5" ry="9" fill="#f2f0ec"/></svg></button>
    <button class="app running" aria-label="Explorer"><svg viewBox="0 0 24 24"><path fill="#d9a520" d="M0 1h9l2 3H0z"/><path fill="#fbd155" d="M0 4h24v18H0z"/><path fill="#2177b8" d="M5 22v-5c0-3 14-3 14 0v5z"/></svg></button>
    <button class="app" aria-label="Monitor"><svg viewBox="0 0 24 24"><path fill="#d9ecf8" stroke="#999" d="M1 3h22v18H1z"/><path fill="#5fa9d2" d="M2 20l4-6 2 2 1-11 3 11 3-9 2 8 2-4 3 9z"/></svg></button>
    <button class="app" aria-label="Lightroom"><svg viewBox="0 0 24 24"><rect width="23" height="24" rx="4" fill="#07243a"/><text x="3" y="16" font-size="11" fill="#55b9f5">Lrc</text></svg></button>
    <button class="app" aria-label="Instagram"><svg viewBox="0 0 24 24"><defs><linearGradient id="ig" x1="0" y1="1" x2="1" y2="0"><stop offset="0" stop-color="#fbc04b"/><stop offset=".5" stop-color="#e53a63"/><stop offset="1" stop-color="#8a3ac8"/></linearGradient></defs><rect width="24" height="24" rx="4" fill="url(#ig)"/><rect x="5" y="5" width="14" height="14" rx="4" fill="none" stroke="#fff" stroke-width="2"/><circle cx="12" cy="12" r="3" fill="none" stroke="#fff" stroke-width="2"/></svg></button>
    <button class="app" aria-label="Edge"><svg viewBox="0 0 24 24"><circle cx="12" cy="12" r="12" fill="#1576c9"/><path fill="#44c8a4" d="M1 8c4-11 22-10 23 3 0 6-7 6-9 5 3-3 0-7-4-7-5 0-9 2-10 5z"/><path fill="#f0eee8" d="M14 16c3-3 0-5-2-5-3 1-3 7 2 9 4 1 7-1 8-3-3 1-6 1-8-1z"/></svg></button>
    <button class="app" aria-label="Premiere"><svg viewBox="0 0 24 24"><rect x="1" y="1" width="22" height="21" fill="#2a0634" stroke="#a66bb3"/><text x="5" y="15" font-size="12" fill="#dfa1ef">Pr</text></svg></button>
    <button class="app" aria-label="3ds Max"><svg viewBox="0 0 24 24"><path fill="#37a5bf" d="M1 0h19l3 3v21H1z"/><path fill="#1d5d75" d="M1 17h21v7H1z"/><text x="7" y="14" font-size="14" fill="#fff">3</text><text x="5" y="23" font-size="6" fill="#fff">MAX</text></svg></button>
    <button class="app" aria-label="Spotify"><svg viewBox="0 0 24 24"><circle cx="12" cy="12" r="12" fill="#2bd163"/><path fill="none" stroke="#143d22" stroke-width="2" d="M5 8c5-2 10-1 14 1M6 12c4-2 8-1 12 1M7 16c3-1 6-1 9 1"/></svg></button>
    <button class="app" aria-label="Google Earth"><svg viewBox="0 0 24 24"><circle cx="12" cy="11" r="11" fill="#909296"/><path fill="none" stroke="#e4e5e6" stroke-width="3" d="M3 4c3 8 10 3 20 9M1 12c7 6 12 2 20 6"/><path fill="#222" d="M5 17h14v6H5z"/><text x="7" y="22" font-size="6" fill="#fff">Pro</text></svg></button>
    <button class="app" aria-label="Lumion 12"><svg viewBox="0 0 24 24"><path fill="#42707c" d="M1 1h22v22H1z"/><path fill="none" stroke="#e7eff0" stroke-width="2" d="M1 4l22 10M22 2L11 9M2 14l9-6"/><text x="6" y="22" font-size="9" fill="#fff">12</text></svg></button>
    <button class="app" aria-label="Media player"><svg viewBox="0 0 24 24"><path fill="#b7d2e4" stroke="#6f9ab8" d="M3 4h18v18H3z"/><circle cx="11" cy="12" r="7" fill="#e08b35"/><path fill="#fff" d="M9 8l6 4-6 4z"/></svg></button>
    <button class="app" aria-label="After Effects"><svg viewBox="0 0 24 24"><rect x="1" y="1" width="22" height="22" rx="4" fill="#06064f"/><text x="4" y="16" font-size="12" fill="#aaa5f7">Ae</text></svg></button>
    <button class="app" aria-label="Photoshop"><svg viewBox="0 0 24 24"><rect x="2" y="1" width="20" height="21" fill="#07222c" stroke="#2bb4c8" stroke-width="2"/><text x="5" y="16" font-size="12" fill="#2fc3df">Ps</text></svg></button>
    <button class="app current" aria-label="Revit"><svg viewBox="0 0 24 24"><path fill="#d6e6f6" d="M1 1h22v22H1z"/><text x="5" y="20" font-size="22" fill="#275d96">R</text></svg></button>
    <button class="app" aria-label="AutoCAD"><svg viewBox="0 0 24 24"><path fill="#d01f4b" d="M1 0h19l3 3v21H1z"/><path fill="#7c0d2b" d="M1 17h21v7H1z"/><text x="6" y="14" font-size="14" fill="#fff">A</text><text x="5" y="23" font-size="6" fill="#fff">CAD</text></svg></button>
    <button class="app running" aria-label="Paint"><svg viewBox="0 0 24 24"><path fill="#2fa4de" d="M12 1c16 0 13 16 5 14-6-1-4 7-9 7C-3 19-2 2 12 1z"/><circle cx="7" cy="8" r="2" fill="#f4c441"/><circle cx="14" cy="6" r="2" fill="#e84f4f"/><circle cx="5" cy="14" r="2" fill="#62d06e"/><path fill="#8b5a34" d="M17 10l4-1-2 14h-2z"/></svg></button>
    <div class="tray">
      <svg width="14" height="10" viewBox="0 0 14 10"><path d="M2 8l5-6 5 6"/></svg>
      <svg width="18" height="18" viewBox="0 0 18 18"><path d="M2 7c1-6 9-8 13-2M15 1v4h-4M2 16v-4h4"/><circle cx="12" cy="12" r="4" fill="#1c6fb8" stroke="none"/></svg>
      <span>ENG</span>
      <div class="quick">
        <svg width="16" height="14" viewBox="0 0 16 14"><path d="M1 5c4-5 10-5 14 0M3 8c3-3 7-3 10 0M5 10c2-2 4-2 6 0"/><circle cx="8" cy="12" r="1" fill="#222"/></svg>
        <svg width="16" height="14" viewBox="0 0 16 14"><path d="M1 5h3l4-4v12L4 9H1zM10 4c2 2 2 4 0 6"/><path stroke="#aaa" d="M12 2c4 3 4 7 0 10"/></svg>
        <svg width="18" height="14" viewBox="0 0 18 14"><rect x="5" y="4" width="11" height="8" rx="2" fill="#222"/><path d="M17 7v3M2 0v3M5 0v3M1 3h5v3H2zM3 6v7"/></svg>
      </div>
      <div class="clock">10:06 PM<br>1/11/2023</div>
    </div>
  </nav>

</body>
</html>
```
FILE: styles.css
```css
* {
  box-sizing: border-box;
}
body {
  margin: 0;
  height: 100vh;
  display: grid;
  grid-template-rows: 29px 20px 96px 27px 1fr 24px 48px;
  background: #eee;
  color: #222;
  font: 11px/15px "Noto Sans", "Open Sans", sans-serif;
  overflow: hidden;
}
button {
  background: none;
  border: 0;
  padding: 0;
  font: inherit;
  color: inherit;
}
.defs {
  position: absolute;
}
.icon10, .icon12, .icon16, .icon32, .arrow, .drop, .launch, .tab-menu, .tool > svg {
  flex: none;
  stroke: currentColor;
  stroke-width: 1;
  fill: none;
}
.icon10 { width: 10px; height: 10px; stroke-width: 2; }
.icon12 { width: 12px; height: 12px; stroke-width: 2; }
.icon16 { width: 16px; height: 16px; }
.icon32 { width: 32px; height: 32px; }
.arrow { width: 8px; height: 8px; margin: 0 2px; }
.off { color: #999; }
.bar {
  width: 1px;
  height: 22px;
  margin: 0 3px;
  background: #bbb;
}
.gap { width: 5px; }

/* title bar */
.titlebar {
  display: flex;
  align-items: flex-start;
  background: #ccc;
}
.qat, .account {
  display: flex;
  align-items: center;
  height: 25px;
  color: #333b47;
}
.qat { width: 524px; }
.qat button {
  width: 24px;
  height: 22px;
  display: grid;
  place-items: center;
}
.qat .off { color: #999; }
.qat .on {
  background: #c5dff5;
  border: 1px solid #2b6cab;
}
.qat .letter {
  font-size: 16px;
  font-weight: bold;
}
.qat .logo-r {
  font-size: 20px;
  font-weight: bold;
  line-height: 22px;
  color: #2767a8;
}
.qat .customize { width: 10px; height: 10px; margin: 0 4px; }
.titlebar h1 {
  flex: 1;
  margin: 0;
  font-size: 11px;
  font-weight: normal;
  line-height: 20px;
  text-align: center;
}
.account { width: 360px; }
.account button { margin: 0 4px; }
.account .signin {
  display: flex;
  gap: 5px;
  margin-right: 46px;
}
.account .help {
  width: 17px;
  height: 17px;
  border: 1px solid #333;
  border-radius: 50%;
  background: #fff;
  color: #1d4f9a;
  font-weight: bold;
  line-height: 13px;
}
.window-buttons {
  margin-left: auto;
  display: flex;
  gap: 5px;
}

/* ribbon tabs */
.tabs {
  display: flex;
  background: #ccc;
}
.tabs button {
  padding: 0 10px 2px;
  font-size: 11px;
}
.tabs .file {
  width: 45px;
  margin-right: 2px;
  background: #2f7bb0;
  color: #fff;
}
.tabs .active { background: #eee; }
.tabs .minimize { padding-left: 20px; }

/* ribbon */
.ribbon {
  display: flex;
  border-bottom: 1px solid #c4c4c4;
}
.group {
  padding: 3px 2px 0;
  border-right: 1px solid #dcdcdc;
}
.group.select { padding: 3px 4px 0; }
.group.last { border: 0; }
.tools {
  display: flex;
  height: 73px;
}
.tool {
  position: relative;
  padding-top: 4px;
  display: flex;
  flex-direction: column;
  align-items: center;
  justify-content: flex-start;
  line-height: 15px;
  text-align: center;
  white-space: nowrap;
}
.tool > svg:first-child {
  width: 30px;
  height: 30px;
  margin-bottom: 4px;
  color: #39414d;
}
.tool:disabled, .tool:disabled > svg:first-child, .small-tools button { color: #aaa; }
.tool.on, .tool.modify {
  background: #c0dcf3;
  border: 1px solid #2b6cab;
}
.tool.modify { background: linear-gradient(#c8e2f8, #a9d0f0); }
.tool.on, .tool.modify { padding-top: 3px; }
.w36 { width: 37px; }
.w40 { width: 41px; }
.w48 { width: 49px; }
.w54 { width: 55px; }
.w60 { width: 60px; }
.w68 { width: 66px; }
.w74 { width: 73px; }
.drop {
  position: absolute;
  right: 1px;
  top: 50px;
  width: 7px;
  height: 7px;
}
.drop.under {
  left: 0;
  right: 0;
  top: 54px;
  margin: auto;
}
.group-name {
  position: relative;
  padding-top: 1px;
  text-align: center;
  line-height: 15px;
}
.launch {
  position: absolute;
  right: 2px;
  bottom: 2px;
  width: 8px;
  height: 8px;
}
.small-tools {
  width: 110px;
  display: flex;
  flex-direction: column;
  gap: 8px;
  padding: 3px 0 0 3px;
}
.small-tools button {
  display: flex;
  align-items: center;
  gap: 4px;
  height: 16px;
  white-space: nowrap;
}
.rule {
  width: 1px;
  margin: 0 4px;
  background: #ccc;
}
.options-bar { border-bottom: 2px solid #c8c8c8; }

/* workspace */
.workspace {
  display: flex;
  min-height: 0;
  background: #ccc;
}
.panel-title {
  display: flex;
  align-items: center;
  justify-content: space-between;
  height: 21px;
  padding: 2px 3px 0;
  background: #eee;
}
.browser {
  width: 251px;
  margin-right: 4px;
  border-bottom: 2px solid #eee;
  background: #fff;
}
.browser .panel-title { padding-right: 5px; }
.tree, .tree ul {
  margin: 0;
  padding: 0;
  list-style: none;
}
.tree { padding-left: 9px; }
.tree ul { margin-left: 20px; }
.tree li { position: relative; }
.tree li::before {
  content: "";
  position: absolute;
  left: 0;
  top: 0;
  bottom: 0;
  border-left: 1px dotted #999;
}
.tree li:last-child::before {
  bottom: auto;
  height: 9px;
}
.tree > li:first-child::before { top: 9px; }
.row {
  display: flex;
  align-items: center;
  height: 18px;
}
.row i { border-top: 1px dotted #999; }
.d6 { width: 6px; }
.d10 { width: 11px; }
.d15 { width: 15px; }
.row span {
  padding: 0 3px;
  line-height: 18px;
}
.row .icon16 {
  margin-right: 4px;
  color: #333b47;
}
.row .selected { background: #e1e1e1; }
.exp {
  position: relative;
  width: 9px;
  height: 9px;
  margin-left: -4px;
  border: 1px solid #999;
  background: #f6f6f6;
  font-size: 9px;
  line-height: 6px;
}

.view {
  flex: 1;
  min-width: 0;
  display: flex;
  flex-direction: column;
}
.view-tabs {
  display: flex;
  height: 21px;
  color: #555;
}
.view-tabs button {
  display: flex;
  align-items: center;
  gap: 7px;
  width: 128px;
  padding: 1px 5px 0 4px;
  font-size: 11px;
}
.view-tabs .active {
  background: #fff;
  color: #222;
  font-weight: bold;
}
.close { margin-left: auto; }
.tab-menu {
  width: 10px;
  height: 10px;
  margin: 6px 4px 0 auto;
  color: #222;
}
.canvas {
  position: relative;
  flex: 1;
  min-height: 0;
  display: flex;
  border: solid #fff;
  border-width: 2px 1px 0;
  background: #ededed;
}
.scene {
  flex: 1;
  min-width: 0;
  height: 100%;
  stroke: #000;
}
.scene path { vector-effect: non-scaling-stroke; }
.wall { fill: #595959; }
.rim { fill: #7c7c7c; }
.viewcube {
  position: absolute;
  right: 28px;
  top: 42px;
  width: 150px;
  height: 110px;
  font-size: 24px;
  font-weight: bold;
  fill: #888;
}
.compass {
  font-size: 44px;
  fill: #ddd;
  stroke: #999;
  stroke-width: 2;
}
.vscroll {
  width: 17px;
  border-left: 2px solid #fff;
  display: grid;
  place-items: center;
}
.vscroll span {
  width: 2px;
  height: 17px;
  background: #888;
}
.view-controls {
  display: flex;
  align-items: center;
  height: 20px;
  padding-left: 10px;
  background: #eee;
  border-bottom: 2px solid #fff;
  color: #39414d;
}
.view-controls .scale {
  width: 67px;
  color: #222;
}
.view-controls button {
  width: 21px;
  height: 16px;
}
.blue { color: #2a7fa5; }
.hscroll {
  width: 16px;
  height: 2px;
  margin: 0 auto 0 36%;
  background: #888;
}

/* properties */
.properties {
  width: 218px;
  margin-left: 3px;
  display: flex;
  flex-direction: column;
  background: #fff;
  border-left: 1px solid #eee;
}
.type {
  display: flex;
  align-items: center;
  height: 72px;
  padding: 2px 0 2px 3px;
  border: 1px solid #ccc;
  background: #eee;
}
.type span {
  flex: 1;
  padding-left: 5px;
  color: #555;
}
.thumb {
  width: 66px;
  height: 66px;
  display: grid;
  place-items: center;
  border: 1px solid #ccc;
}
.instance {
  display: flex;
  align-items: center;
  justify-content: space-between;
  height: 24px;
  padding-right: 7px;
  background: #eee;
}
.instance button {
  display: flex;
  gap: 5px;
}
select {
  appearance: none;
  height: 21px;
  border: 1px solid #ddd;
  border-radius: 0;
  padding: 0 4px;
  background: #fff url("data:image/svg+xml,%3Csvg xmlns='http://www.w3.org/2000/svg' width='10' height='6' fill='none' stroke='%23777'%3E%3Cpath d='M1 1l4 4 4-4'/%3E%3C/svg%3E") no-repeat right 3px center;
  font: inherit;
  color: #222;
}
.instance select { width: 133px; }
.properties table {
  width: 100%;
  table-layout: fixed;
  border-collapse: separate;
  border-spacing: 0;
}
.name { width: 104px; }
.link { width: 13px; }
.properties th, .properties td {
  height: 18px;
  padding: 0 0 0 2px;
  overflow: hidden;
  border-right: 1px dotted #777;
  border-bottom: 1px dotted #777;
  font-weight: normal;
  line-height: 15px;
  text-align: left;
  white-space: nowrap;
}
.properties th { padding-left: 8px; }
.properties .cat th {
  padding: 0 2px;
  border: 0;
  background: #dcdcdc;
}
.cat .arrow {
  float: right;
  height: 10px;
  margin: 2px 3px 0;
}
.properties .focused { border: 1px solid #111; }
.readonly { color: #888; }
td button {
  display: block;
  width: 97px;
  height: 16px;
  border: 1px solid #ddd;
  border-bottom: 2px solid #c4c4c4;
  border-radius: 3px;
  background: #fdfdfd;
  line-height: 12px;
}
td input {
  appearance: none;
  display: block;
  width: 13px;
  height: 13px;
  margin: 2px 0 0;
  border: 1px solid #777;
  border-radius: 3px;
  background: #fafafa;
}
td input:disabled { border-color: #ccc; }
.properties-footer {
  display: flex;
  justify-content: space-between;
  align-items: flex-start;
  height: 28px;
  margin-top: auto;
  padding: 4px 3px 0;
  background: #eee;
}
.properties-footer a { color: #2a6db0; }
.properties-footer button {
  width: 70px;
  height: 19px;
  border-radius: 3px;
  background: #f8f8f8;
  color: #888;
}

/* status bar */
.status {
  position: relative;
  display: flex;
  align-items: center;
  background: #ccc;
}
.hint {
  flex: 1;
  padding-left: 2px;
}
.worksets, .selection {
  display: flex;
  align-items: center;
  gap: 9px;
}
.worksets select {
  width: 204px;
  height: 18px;
}
.worksets .muted { color: #777; }
.worksets .count { margin-right: 12px; }
.count {
  display: flex;
  align-items: center;
}
.count b {
  font-weight: normal;
  color: #222;
}
.selection {
  flex: 0 0 252px;
  margin-left: 228px;
  gap: 10px;
}
.toast {
  position: absolute;
  right: 0;
  bottom: 13px;
  width: 286px;
  height: 28px;
  padding: 5px 10px 0;
  background: rgba(238, 238, 238, 0.4);
  border-radius: 3px;
  color: #aaa;
  text-align: right;
  white-space: nowrap;
}

/* windows taskbar */
.taskbar {
  display: flex;
  align-items: center;
  padding-left: 10px;
  background: linear-gradient(90deg, #e3e9e2, #efebe4 25%, #eeeee8 60%, #f1ebe2);
}
.app {
  position: relative;
  width: 44px;
  height: 40px;
  display: grid;
  place-items: center;
}
.app svg {
  width: 24px;
  height: 24px;
}
.app text { font-weight: bold; }
.weather { margin-left: 3px; }
.badge {
  position: absolute;
  right: 3px;
  top: 0;
  padding: 0 3px;
  border-radius: 8px;
  background: #fff;
  font-size: 10px;
}
.running::after, .current::after {
  content: "";
  position: absolute;
  bottom: 0;
  width: 6px;
  height: 3px;
  border-radius: 2px;
  background: #888;
}
.current {
  border-radius: 4px;
  background: #f9f8f6;
}
.current::after {
  width: 16px;
  background: #2f6a99;
}
.search {
  width: 98px;
  height: 30px;
  margin: 0 1px 0 5px;
  display: flex;
  align-items: center;
  justify-content: center;
  gap: 5px;
  border-radius: 15px;
  background: #fbfaf8;
}
.tray {
  margin-left: auto;
  padding-right: 20px;
  display: flex;
  align-items: center;
  gap: 10px;
}
.tray svg {
  fill: none;
  stroke: #222;
}
.quick {
  width: 78px;
  height: 38px;
  display: flex;
  align-items: center;
  justify-content: center;
  gap: 8px;
  border-radius: 4px;
  background: #f8f6f2;
}
.clock {
  text-align: right;
  line-height: 16px;
}
```
